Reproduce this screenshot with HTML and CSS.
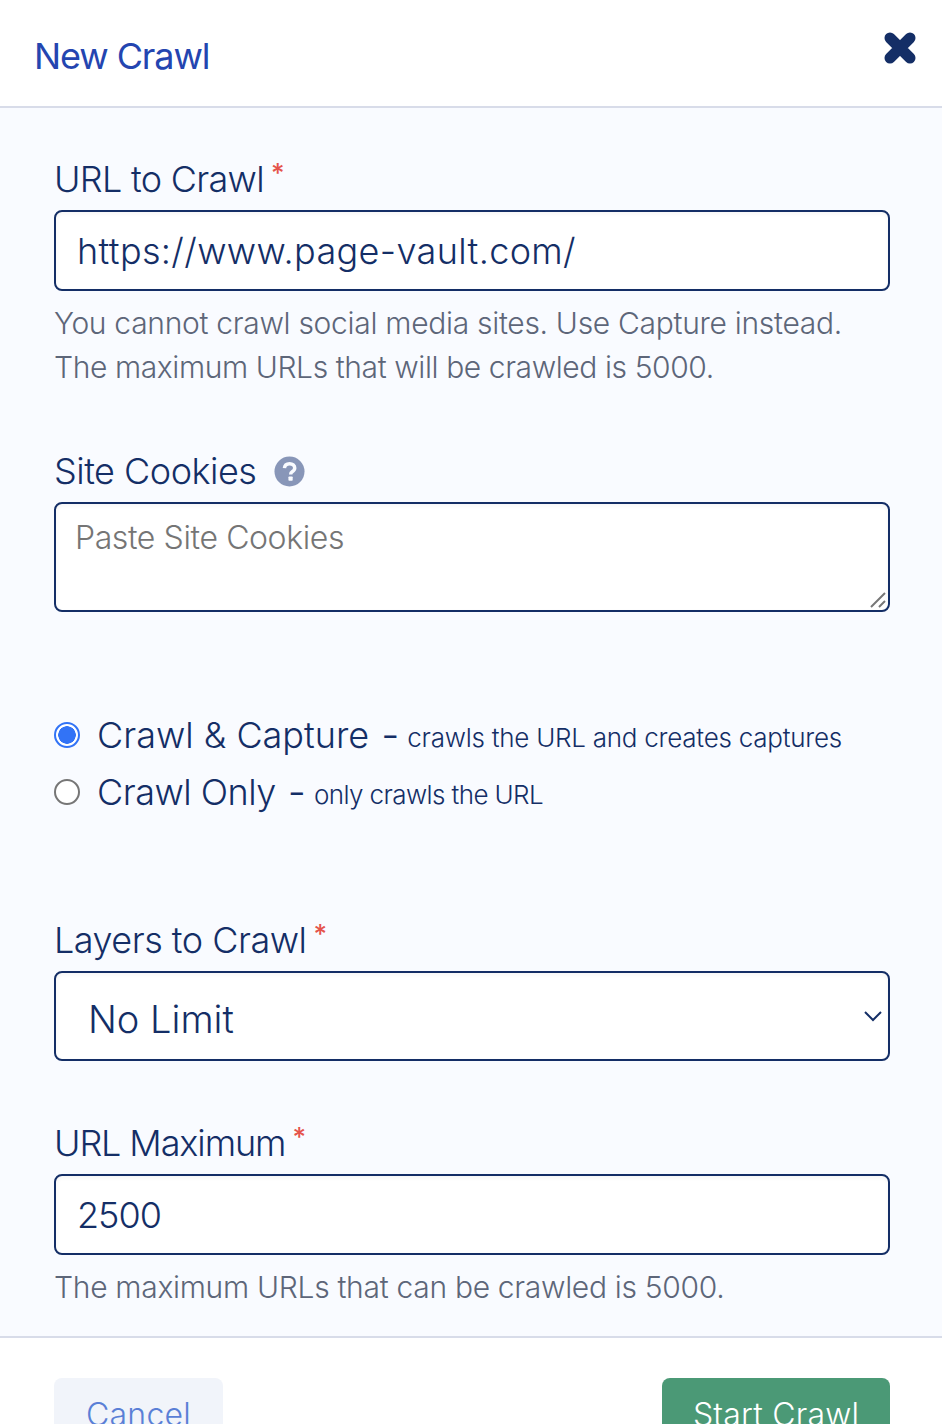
FILE: index.html
```html
<!DOCTYPE html>
<html lang="en">
<head>
    <meta charset="UTF-8">
    <meta name="viewport" content="width=device-width, initial-scale=1.0">
    <title>New Crawl</title>
    <link rel="stylesheet" href="styles.css">
</head>
<body>
    <div class="modal">
        <header class="modal-header">
            <h1 class="modal-title">New Crawl</h1>
            <button class="close-btn" type="button" aria-label="Close">
                <svg width="34" height="34" viewBox="0 0 34 34">
                    <path d="M7 7 L27 27 M27 7 L7 27" stroke="#142e66" stroke-width="11" stroke-linecap="round"/>
                </svg>
            </button>
        </header>

        <main class="modal-body">
            <div class="field field-url">
                <label class="field-label">URL to Crawl<span class="required">*</span></label>
                <input class="text-input" type="text" value="https://www.page-vault.com/">
                <p class="help">You cannot crawl social media sites. Use Capture instead.</p>
                <p class="help">The maximum URLs that will be crawled is 5000.</p>
            </div>

            <div class="field field-cookies">
                <label class="field-label">Site Cookies
                    <svg class="help-icon" width="31" height="31" viewBox="0 0 32 32">
                        <circle cx="16" cy="16" r="15.5" fill="#8896b8"/>
                        <path d="M10.8 12.6 C11 9.6 13.2 8 16.1 8 C19.2 8 21.4 9.8 21.4 12.4 C21.4 14.4 20.2 15.4 18.8 16.3 C17.6 17.1 17.2 17.6 17.2 19" fill="none" stroke="#f9fbff" stroke-width="3.6"/>
                        <rect x="14.9" y="21.2" width="4.4" height="4.4" rx="0.8" fill="#f9fbff"/>
                    </svg>
                </label>
                <div class="area-wrap">
                    <textarea class="text-area" placeholder="Paste Site Cookies"></textarea>
                    <svg class="resize-grip" width="16" height="16" viewBox="0 0 16 16">
                        <path d="M1 15 L15 1 M9 15 L15 9" stroke="#777" stroke-width="2"/>
                    </svg>
                </div>
            </div>

            <div class="radio-group">
                <label class="radio-row">
                    <input type="radio" name="mode" checked>
                    <span class="radio-name radio-name-wide">Crawl &amp; Capture</span>
                    <span class="radio-dash">-</span>
                    <span class="radio-note radio-note-wide">crawls the URL and creates captures</span>
                </label>
                <label class="radio-row">
                    <input type="radio" name="mode">
                    <span class="radio-name">Crawl Only</span>
                    <span class="radio-dash">-</span>
                    <span class="radio-note">only crawls the URL</span>
                </label>
            </div>

            <div class="field field-layers">
                <label class="field-label">Layers to Crawl<span class="required">*</span></label>
                <div class="select-wrap">
                    <select class="select-input">
                        <option>No Limit</option>
                    </select>
                    <svg class="select-arrow" width="18" height="12" viewBox="0 0 18 12">
                        <path d="M1 2 L9 10 L17 2" fill="none" stroke="#142e66" stroke-width="2"/>
                    </svg>
                </div>
            </div>

            <div class="field field-max">
                <label class="field-label">URL Maximum<span class="required">*</span></label>
                <input class="text-input text-input-number" type="text" value="2500">
                <p class="help">The maximum URLs that can be crawled is 5000.</p>
            </div>
        </main>

        <footer class="modal-footer">
            <button class="btn btn-cancel" type="button">Cancel</button>
            <button class="btn btn-start" type="button">Start Crawl</button>
        </footer>
    </div>
</body>
</html>
```

FILE: styles.css
```css
* {
    box-sizing: border-box;
}

html, body {
    margin: 0;
    height: 1424px;
    overflow: hidden;
}

body {
    background-color: #fff;
    color: #142e66;
    font-family: Inter, sans-serif;
    font-weight: 300;
}

.modal-header {
    display: flex;
    justify-content: space-between;
    height: 108px;
    padding: 30px 24px 0 34px;
    border-bottom: 2px solid #d8dce9;
}

.modal-title {
    margin: 0;
    font-size: 36px;
    font-weight: 400;
    line-height: 52px;
    letter-spacing: -1.1px;
    color: #2445b0;
}

.close-btn {
    width: 36px;
    height: 36px;
    margin-top: 1px;
    padding: 0;
    border: none;
    background: none;
}

.modal-body {
    height: 1230px;
    padding: 0 52px 0 54px;
    background-color: #f9fbff;
    border-bottom: 2px solid #d8dce9;
}

.field-url {
    padding-top: 48px;
}

.field-cookies {
    padding-top: 59px;
}

.field-layers {
    padding-top: 97px;
}

.field-max {
    padding-top: 59px;
}

.field-label {
    display: flex;
    align-items: center;
    height: 54px;
    padding-bottom: 8px;
    font-size: 36px;
    letter-spacing: -0.7px;
}

.field-cookies .field-label,
.field-layers .field-label {
    letter-spacing: -0.5px;
}

.field-max .field-label {
    letter-spacing: -1.1px;
}

.required {
    align-self: flex-start;
    margin-left: 7px;
    font-size: 26px;
    font-weight: 500;
    line-height: 34px;
    color: #e5534b;
}

.help-icon {
    margin-left: 18px;
}

.text-input,
.text-area,
.select-input {
    display: block;
    width: 100%;
    border: 2px solid #142e66;
    border-radius: 8px;
    background-color: #fff;
    box-shadow: inset 0 2px 4px rgba(0, 0, 0, 0.04);
    color: #142e66;
    font-family: Inter, sans-serif;
    font-weight: 300;
}

.text-input {
    height: 81px;
    padding: 0 21px;
    font-size: 36px;
    letter-spacing: 0.35px;
}

.text-input-number {
    letter-spacing: -1px;
}

.area-wrap,
.select-wrap {
    position: relative;
}

.text-area {
    height: 110px;
    padding: 14px 19px;
    font-size: 32px;
    letter-spacing: -0.4px;
    resize: none;
}

.text-area::placeholder {
    color: #757575;
}

.resize-grip {
    position: absolute;
    right: 4px;
    bottom: 4px;
}

.help {
    margin: 0;
    font-size: 30px;
    line-height: 44px;
    letter-spacing: -0.4px;
    color: #5d6679;
}

.text-input + .help {
    margin-top: 10px;
    letter-spacing: -0.3px;
}

.radio-group {
    padding-top: 94px;
}

.radio-row {
    display: flex;
    align-items: center;
    height: 57px;
}

.radio-row input {
    width: 26px;
    height: 26px;
    margin: 0 17px 0 0;
    border: 2px solid #767676;
    border-radius: 50%;
    background-color: #fff;
    appearance: none;
}

.radio-row input:checked {
    border-color: #3273f6;
    background: radial-gradient(circle, #3273f6 0 8.5px, #fff 9px);
}

.radio-name {
    font-size: 36px;
    letter-spacing: -0.5px;
}

.radio-name-wide {
    letter-spacing: 0;
}

.radio-dash {
    margin: 0 8px 0 12px;
    font-size: 40px;
    line-height: 1;
}

.radio-note {
    padding-top: 6px;
    font-size: 26px;
    letter-spacing: -0.6px;
}

.radio-note-wide {
    letter-spacing: -0.25px;
}

.select-input {
    height: 90px;
    padding: 6px 32px 0;
    font-size: 38px;
    appearance: none;
}

.select-arrow {
    position: absolute;
    top: 39px;
    right: 8px;
}

.modal-footer {
    display: flex;
    justify-content: space-between;
    padding: 40px 52px 0 54px;
}

.btn {
    height: 72px;
    padding: 0;
    border: none;
    border-radius: 8px;
    font-family: Inter, sans-serif;
    font-size: 32px;
    font-weight: 300;
    letter-spacing: 0.2px;
}

.btn-cancel {
    width: 169px;
    background-color: #f1f4fa;
    color: #5a7fd6;
}

.btn-start {
    width: 228px;
    background-color: #4b9976;
    color: #fff;
}
```
